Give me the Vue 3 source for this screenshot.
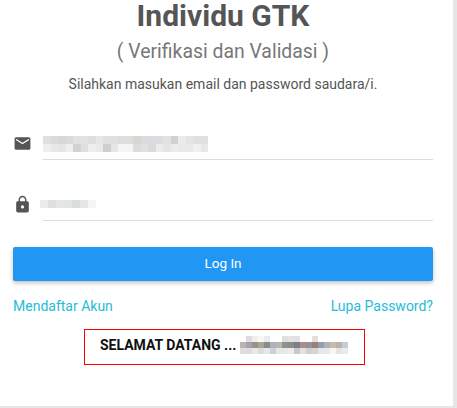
<template>
  <div class="page">
    <div class="card">
      <h1>Individu GTK</h1>
      <h2>( Verifikasi dan Validasi )</h2>
      <p class="intro">Silahkan masukan email dan password saudara/i.</p>

      <div class="field field-email">
        <svg class="icon" viewBox="0 0 24 24">
          <path d="M20 4H4c-1.1 0-1.99.9-1.99 2L2 18c0 1.1.9 2 2 2h16c1.1 0 2-.9 2-2V6c0-1.1-.9-2-2-2zm0 4l-8 5-8-5V6l8 5 8-5v2z" />
        </svg>
        <div class="input">
          <div class="blur blur-email">
            <i v-for="(c, i) in emailCells" :key="i" :style="{ background: c }"></i>
          </div>
        </div>
      </div>

      <div class="field field-pass">
        <svg class="icon" viewBox="0 0 24 24">
          <path d="M18 8h-1V6c0-2.76-2.24-5-5-5S7 3.24 7 6v2H6c-1.1 0-2 .9-2 2v10c0 1.1.9 2 2 2h12c1.1 0 2-.9 2-2V10c0-1.1-.9-2-2-2zm-6 9c-1.1 0-2-.9-2-2s.9-2 2-2 2 .9 2 2-.9 2-2 2zm3.1-9H8.9V6c0-1.71 1.39-3.1 3.1-3.1 1.71 0 3.1 1.39 3.1 3.1v2z" />
        </svg>
        <div class="input">
          <div class="blur blur-pass">
            <i v-for="(c, i) in passCells" :key="i" :style="{ background: c }"></i>
          </div>
        </div>
      </div>

      <button class="login" type="button">Log In</button>

      <div class="links">
        <a href="#">Mendaftar Akun</a>
        <a href="#">Lupa Password?</a>
      </div>

      <div class="welcome">
        <strong>SELAMAT DATANG ...</strong>
        <div class="blur blur-name">
          <i v-for="(c, i) in nameCells" :key="i" :style="{ background: c }"></i>
        </div>
      </div>
    </div>
  </div>
</template>

<script setup>
const emailCells = [
  "#dfdfdf", "#dcdad9", "#d9d8d7", "#dcdad9", "#e2e2e1", "#e1e1e0", "#dedede", "#e4e6e7",
  "#dfe1e2", "#dfe0e1", "#dddddc", "#dddddb", "#d9d6d2", "#d9dbde", "#dadde0", "#dedddd",
  "#e0e2e4", "#d1d1d1", "#ebebeb", "#e4e4e4", "#e0e1df", "#dde1e4",
  "#eeeeec", "#e8e8e8", "#e6e6e5", "#efefef", "#d3d2d2", "#dde0e2", "#eeeeee", "#e9e9e9",
  "#cfcfcf", "#e6e6e6", "#f5f5f5", "#f5f5f5", "#dedbd8", "#dfe1e3", "#d8dade", "#ebebea",
  "#e3e5e7", "#ebebeb", "#e9e9e9", "#e8e8e8", "#f0f0ee", "#e6e8ea",
];
const passCells = ["#ececec", "#dfdfdf", "#e6e6e3", "#e0e5e8", "#dcdcdc", "#e6e6e4", "#f4f5f9"];
const nameCells = [
  "#fff", "#dcdcdc", "#f1efec", "#fbf6ee", "#e6ecf1", "#fff", "#fff", "#e0e0dd", "#e3e3e3",
  "#e0e0e0", "#fff", "#fff", "#e3dfdc", "#fff", "#fff", "#fff", "#fff", "#fff",
  "#b9b4b4", "#a6a3ae", "#94948a", "#a8a49c", "#8f8a80", "#aeb0c4", "#b6b8a8", "#8f9090",
  "#8c8c8c", "#7e7e8a", "#a89088", "#8e949c", "#9c8078", "#94a0a8", "#aab4b8", "#c4bcb0",
  "#b8b4ac", "#c4ccd4",
  "#e0dcdc", "#dcdcdc", "#ece8e4", "#dcdcd8", "#e4e8ec", "#c8d0d8", "#e4e8ec", "#e8e8e4",
  "#ecece8", "#c8c8c8", "#e8e0dc", "#d0d0d0", "#d8d4d0", "#e4e8ec", "#ece8e4", "#fbf6f0",
  "#e8e4e0", "#e8ecf0",
];
</script>

<style>
html,
body {
  margin: 0;
  background: #fff;
}
</style>

<style scoped>
.page {
  width: 457px;
  height: 408px;
  overflow: hidden;
  background: #e6e6e6;
}

.card {
  box-sizing: border-box;
  width: 453px;
  height: 406px;
  padding: 0 20px 0 13px;
  background: #fff;
  font-family: Roboto, sans-serif;
  color: #555;
}

h1 {
  margin: 0;
  height: 34px;
  font-size: 30px;
  line-height: 32px;
  font-weight: 700;
  text-align: center;
  color: #555;
}

h2 {
  margin: 4px 0 0;
  font-size: 19.4px;
  line-height: 28px;
  font-weight: 400;
  text-align: center;
  color: #777;
}

.intro {
  margin: 8px 0 0;
  font-size: 14px;
  line-height: 20px;
  text-align: center;
  color: #555;
}

.field {
  display: flex;
  gap: 11px;
}

.field-email {
  margin-top: 28px;
}

.field-pass {
  margin-top: 23px;
}

.icon {
  flex: none;
  width: 19px;
  height: 19px;
  margin-top: 12px;
  fill: #555;
}

.input {
  flex: 1;
  height: 37px;
  border-bottom: 1px solid #ddd;
}

.blur {
  display: grid;
}

.blur i {
  display: block;
}

.blur-email {
  grid-template-columns: repeat(22, 7.5px);
  grid-auto-rows: 8px;
  margin-top: 14px;
}

.blur-pass {
  grid-template-columns: repeat(7, 8px);
  grid-auto-rows: 8px;
  margin: 17px 0 0 -3px;
}

.login {
  display: block;
  width: 100%;
  height: 34px;
  margin-top: 26px;
  padding: 0 0 2px;
  border: none;
  border-radius: 2px;
  background: #2196f3;
  color: #fff;
  font-family: inherit;
  font-size: 13.5px;
  box-shadow: 0 2px 4px rgba(0, 0, 0, 0.25);
}

.links {
  display: flex;
  justify-content: space-between;
  margin-top: 15px;
  font-size: 14px;
  line-height: 20px;
}

.links a {
  color: #26bcd7;
  text-decoration: none;
}

.welcome {
  display: flex;
  align-items: center;
  gap: 4px;
  box-sizing: border-box;
  width: 281px;
  height: 36px;
  margin: 13px 0 0 71px;
  padding: 0 0 4px 15px;
  border: 1px solid #f00;
  font-size: 14px;
  color: #000;
}

.welcome strong {
  font-family: Roboto, sans-serif;
  font-weight: 700;
  color: #111;
}

.blur-name {
  grid-template-columns: repeat(18, 6px);
  grid-auto-rows: 6px;
}
</style>
